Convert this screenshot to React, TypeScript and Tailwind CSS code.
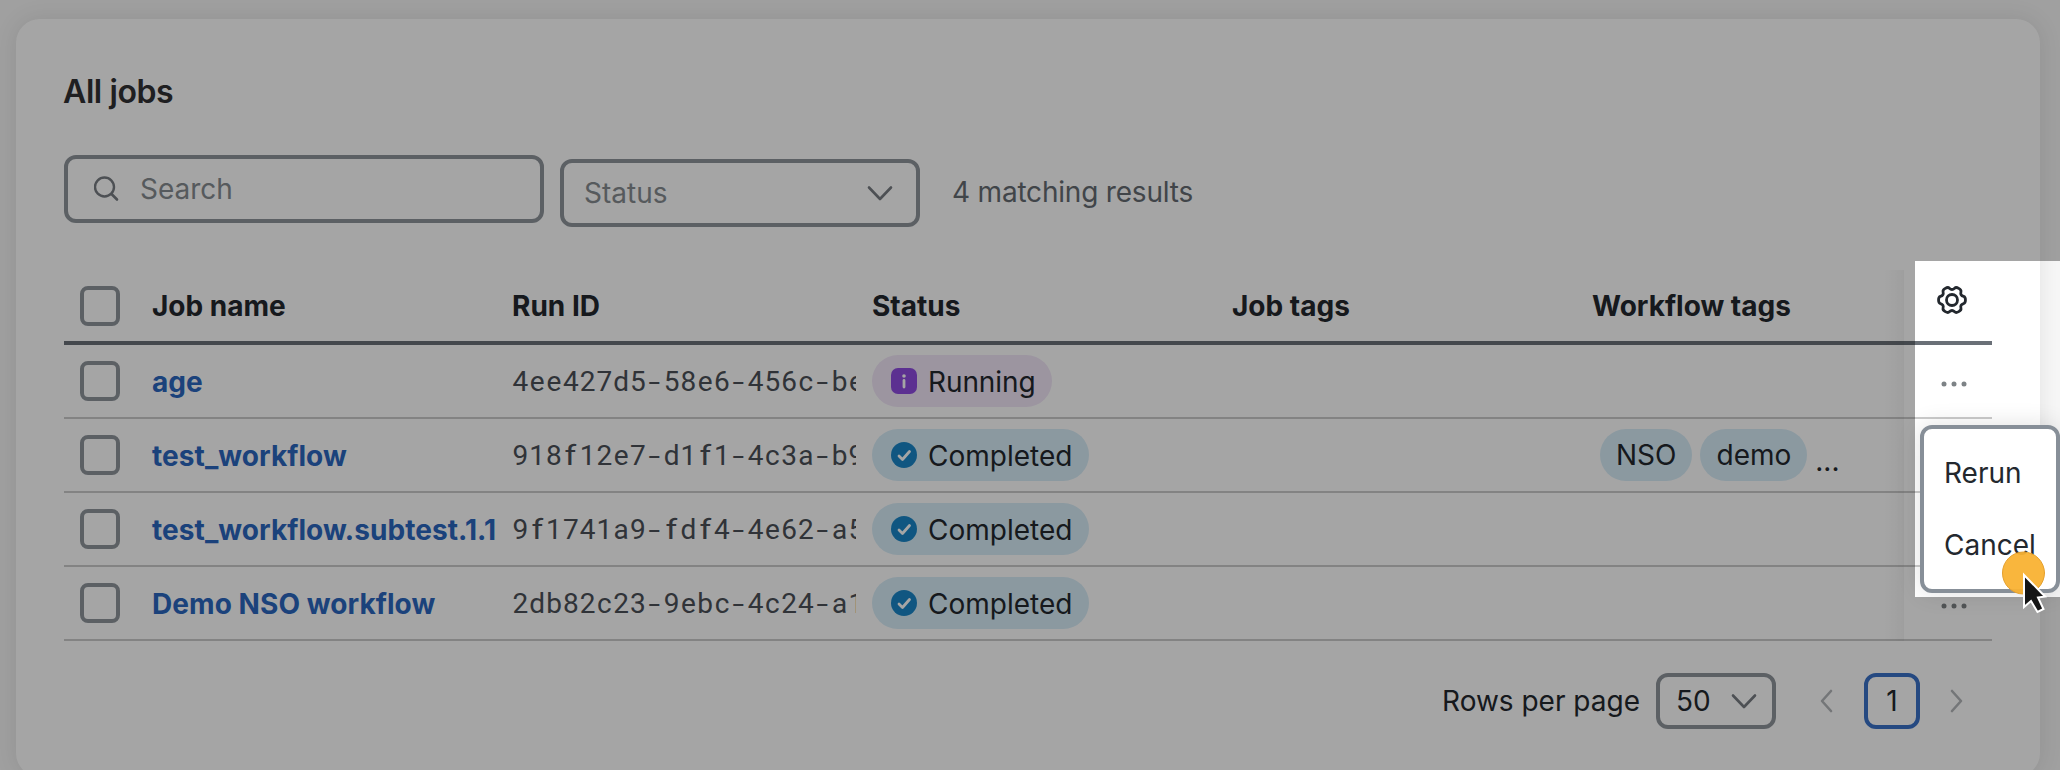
import type { ReactNode } from 'react'
import { clsx } from 'clsx'

// ─── Types ───────────────────────────────────────────────────────────

type JobStatus = 'running' | 'completed'

interface Job {
  name: string
  runId: string
  status: JobStatus
  workflowTags?: string[]
}

// ─── Data ────────────────────────────────────────────────────────────

const COLUMNS = ['Job name', 'Run ID', 'Status', 'Job tags', 'Workflow tags']

const JOBS: Job[] = [
  { name: 'age', runId: '4ee427d5-58e6-456c-be', status: 'running' },
  {
    name: 'test_workflow',
    runId: '918f12e7-d1f1-4c3a-b9',
    status: 'completed',
    workflowTags: ['NSO', 'demo'],
  },
  { name: 'test_workflow.subtest.1.1', runId: '9f1741a9-fdf4-4e62-a5', status: 'completed' },
  { name: 'Demo NSO workflow', runId: '2db82c23-9ebc-4c24-a1', status: 'completed' },
]

const GRID = 'grid grid-cols-[88px_360px_360px_360px_360px_1fr_88px]'

// ─── Helpers ─────────────────────────────────────────────────────────

// Outline of a gear with six rounded teeth, centred on 15,15
function gearOutline(): string {
  const points: [number, number][] = []
  for (let tooth = 0; tooth < 6; tooth++) {
    const corners = [
      [-13, 13.8],
      [13, 13.8],
      [23, 10.6],
      [37, 10.6],
    ]
    for (const [offset, radius] of corners) {
      const angle = ((tooth * 60 + offset) * Math.PI) / 180
      points.push([15 + radius * Math.cos(angle), 15 + radius * Math.sin(angle)])
    }
  }
  const mid = (a: [number, number], b: [number, number]) =>
    `${((a[0] + b[0]) / 2).toFixed(2)} ${((a[1] + b[1]) / 2).toFixed(2)}`
  const curves = points.map((point, i) => {
    const next = points[(i + 1) % points.length]
    return `Q${point[0].toFixed(2)} ${point[1].toFixed(2)} ${mid(point, next)}`
  })
  return `M${mid(points[points.length - 1], points[0])}${curves.join('')}Z`
}

// ─── Component ───────────────────────────────────────────────────────

export default function App() {
  return (
    <div className="relative h-[770px] w-[2060px] overflow-hidden bg-[#f7f7f7] px-4 pt-[19px] font-['Inter','Liberation_Sans',sans-serif] text-[28px] leading-9 text-[#23282e]">
      <main className="h-[758px] w-[2024px] rounded-3xl bg-white px-12 pt-[53px] shadow-[0_0_24px_rgba(0,0,0,0.09)]">
        <h1 className="-ml-px h-10 text-[32px] leading-10 font-semibold tracking-[-0.4px] text-[#303133]">
          All jobs
        </h1>

        <Filters />

        <div className="relative mt-[43px]">
          <HeaderRow />
          {JOBS.map((job) => (
            <JobRow key={job.name} job={job} />
          ))}
          {/* Edge shadow of the sticky actions column */}
          <div className="absolute top-0 right-[88px] h-full w-5 bg-gradient-to-l from-black/4 to-transparent" />
        </div>

        <Pagination />
      </main>

      {/* Dimmed backdrop with a cut-out over the actions column */}
      <div className="absolute top-[261px] left-[1915px] h-[336px] w-[145px] shadow-[0_0_0_2100px_rgba(0,0,0,0.353)]" />

      <ActionMenu />
      <Pointer />
    </div>
  )
}

// ─── Sections ────────────────────────────────────────────────────────

function Filters() {
  return (
    <div className="mt-[43px] flex h-[72px] items-start">
      <div className="flex h-[68px] w-[480px] items-center rounded-xl border-4 border-[#8f959b] pl-[26px] text-[#868b90]">
        <SearchIcon />
        <span className="ml-5">Search</span>
      </div>
      <div className="mt-1 ml-4 flex h-[68px] w-[360px] items-center justify-between rounded-xl border-4 border-[#8f959b] pr-[23px] pl-5 text-[#868b90]">
        <span>Status</span>
        <ChevronDown />
      </div>
      <span className="mt-[19px] ml-8 tracking-[-0.2px] text-[#656b72]">4 matching results</span>
    </div>
  )
}

function HeaderRow() {
  return (
    <div className={clsx(GRID, 'h-[75px] items-center border-b-4 border-[#6a7077] font-bold')}>
      <Checkbox />
      {COLUMNS.map((column) => (
        <span key={column} className="pt-px">
          {column}
        </span>
      ))}
      <span className="mb-3 flex justify-center pl-2">
        <GearIcon />
      </span>
    </div>
  )
}

function JobRow({ job }: { job: Job }) {
  return (
    <div className={clsx(GRID, 'h-[74px] items-center border-b-2 border-[#cbcbcb]')}>
      <Checkbox />
      <a className="pt-px font-bold tracking-[0.07px] whitespace-nowrap text-[#2b66bf]">
        {job.name}
      </a>
      <RunId value={job.runId} />
      <div>
        <StatusPill status={job.status} />
      </div>
      <span />
      <div className="flex items-center gap-2 pl-2">
        {job.workflowTags?.map((tag) => (
          <span key={tag} className="flex h-[52px] items-center rounded-full bg-[#d7edf8] px-4">
            {tag}
          </span>
        ))}
        {job.workflowTags && <span className="mt-3">...</span>}
      </div>
      <span className="flex justify-center pt-[5px] pl-[11px]">
        <MoreIcon />
      </span>
    </div>
  )
}

function Pagination() {
  return (
    <div className="mt-8 flex h-14 items-center justify-end pr-[29px]">
      <span>Rows per page</span>
      <div className="ml-4 flex h-14 w-[120px] items-center justify-between rounded-xl border-4 border-[#8f959b] pr-[15px] pl-4">
        <span>50</span>
        <ChevronDown />
      </div>
      <PageArrow className="ml-11" d="M11 2 2 12l9 10" />
      <span className="ml-[31px] flex h-14 w-14 items-center justify-center rounded-xl border-4 border-[#3a72c8]">
        1
      </span>
      <PageArrow className="ml-[30px]" d="m2 2 9 10-9 10" />
    </div>
  )
}

function ActionMenu() {
  return (
    <div className="absolute top-[425px] left-[1920px] h-[168px] w-[140px] rounded-xl border-4 border-[#878f98] bg-white pt-2 pl-5 shadow-[0_0_24px_rgba(0,0,0,0.12)]">
      <div className="flex h-[72px] items-center">Rerun</div>
      <div className="flex h-[72px] items-center">Cancel</div>
    </div>
  )
}

// ─── Sub-components ──────────────────────────────────────────────────

function Checkbox() {
  return <span className="ml-4 block h-10 w-10 rounded-lg border-4 border-[#8f959b]" />
}

// Roboto has no fixed-width cut, so every character gets its own cell
function RunId({ value }: { value: string }) {
  return (
    <div className="mr-4 overflow-hidden pt-0.5 font-['Roboto',sans-serif] whitespace-nowrap text-[#4b5057]">
      {value.split('').map((char, i) => (
        <span
          key={i}
          className={clsx(
            'inline-block w-[16.8px] text-center',
            char === '-' && 'scale-x-150',
            char === 'f' && 'scale-x-120'
          )}
        >
          {char}
        </span>
      ))}
    </div>
  )
}

function StatusPill({ status }: { status: JobStatus }) {
  const running = status === 'running'
  return (
    <span
      className={clsx(
        'inline-flex h-[52px] items-center gap-[11px] rounded-full pr-[17px] pl-[19px] align-middle',
        running ? 'bg-[#f1e6f8] tracking-[-0.1px]' : 'bg-[#d7edf8]'
      )}
    >
      {running ? <InfoBadge /> : <CheckBadge />}
      <span className="pt-px">{running ? 'Running' : 'Completed'}</span>
    </span>
  )
}

// ─── Icons ───────────────────────────────────────────────────────────

function Svg({
  w,
  h,
  className,
  children,
}: {
  w: number
  h: number
  className?: string
  children: ReactNode
}) {
  return (
    <svg
      width={w}
      height={h}
      viewBox={`0 0 ${w} ${h}`}
      fill="none"
      stroke="currentColor"
      strokeLinecap="round"
      strokeLinejoin="round"
      aria-hidden="true"
      className={clsx('shrink-0', className)}
    >
      {children}
    </svg>
  )
}

function SearchIcon() {
  return (
    <Svg w={26} h={26} className="text-[#777c82]">
      <circle cx="10.5" cy="11" r="9.5" strokeWidth="2.4" />
      <path d="m17.5 18 5.5 5.5" strokeWidth="2.6" />
    </Svg>
  )
}

function ChevronDown() {
  return (
    <Svg w={26} h={16} className="text-[#777c82]">
      <path d="m2 2.5 11 11.5L24 2.5" strokeWidth="2.6" />
    </Svg>
  )
}

function PageArrow({ d, className }: { d: string; className?: string }) {
  return (
    <Svg w={13} h={24} className={clsx('text-[#b4b7ba]', className)}>
      <path d={d} strokeWidth="2.6" />
    </Svg>
  )
}

function InfoBadge() {
  return (
    <Svg w={26} h={26}>
      <rect width="26" height="26" rx="7" fill="#8e4be0" stroke="none" />
      <circle cx="13" cy="8" r="1.8" fill="#fff" stroke="none" />
      <path d="M13 12.5V19" stroke="#fff" strokeWidth="2.8" />
    </Svg>
  )
}

function CheckBadge() {
  return (
    <Svg w={26} h={26}>
      <circle cx="13" cy="13" r="13" fill="#1a86c7" stroke="none" />
      <path d="m8 14 3.5 3.5L18.5 9.5" stroke="#fff" strokeWidth="2.8" />
    </Svg>
  )
}

function GearIcon() {
  return (
    <Svg w={30} h={30}>
      <path d={gearOutline()} strokeWidth="2.8" />
      <circle cx="15" cy="15" r="5.5" strokeWidth="2.8" />
    </Svg>
  )
}

function MoreIcon() {
  return (
    <Svg w={26} h={6} className="text-[#7d8286]">
      <circle cx="3" cy="3" r="2.5" fill="currentColor" stroke="none" />
      <circle cx="13" cy="3" r="2.5" fill="currentColor" stroke="none" />
      <circle cx="23" cy="3" r="2.5" fill="currentColor" stroke="none" />
    </Svg>
  )
}

// Click highlight and mouse arrow
function Pointer() {
  return (
    <Svg w={46} h={64} className="absolute top-[551px] left-[2001px]">
      <circle cx="22.5" cy="22" r="21" fill="#f9b233" fillOpacity="0.95" stroke="#e5a02d" />
      <path
        d="M23 24V56L30 50L36.5 61L42.5 58L37 46.5L44 45.5Z"
        fill="#151515"
        stroke="#fff"
        strokeWidth="2"
        strokeLinejoin="miter"
      />
    </Svg>
  )
}
